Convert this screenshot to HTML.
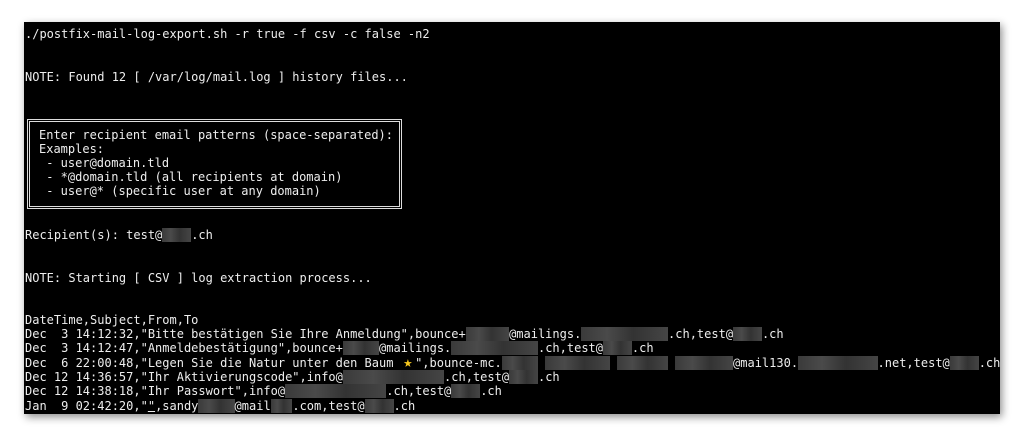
<!DOCTYPE html>
<html><head><meta charset="utf-8">
<style>
html,body{margin:0;padding:0;background:#fff;width:1024px;height:440px;overflow:hidden}
#t{position:absolute;left:24px;top:22px;width:976px;height:392px;background:#000;box-shadow:2px 3px 8px rgba(0,0,0,.45);}
.l{position:absolute;left:25px;font-family:"DejaVu Sans Mono","Liberation Mono",monospace;font-size:12px;line-height:14px;color:#eeeeee;white-space:pre;}
.b{background:linear-gradient(90deg,#3a3a3a,#4a4a4a 30%,#333 60%,#454545);color:transparent}
#box{position:absolute;left:27px;top:119px;width:369px;height:84px;border:3px double #ddd;}
.cur{text-decoration:underline}
.star{display:inline-block;width:14.4px;text-align:center;color:#f7c81e;font-size:15px;line-height:12px;vertical-align:top}
</style></head><body>
<div id="t"></div>
<div class="l" style="top:27px">./postfix-mail-log-export.sh -r true -f csv -c false -n2</div>
<div class="l" style="top:70px">NOTE: Found 12 [ /var/log/mail.log ] history files...</div>
<div id="box"></div>
<div class="l" style="top:128px;left:39px">Enter recipient email patterns (space-separated):
Examples:
 - user@domain.tld
 - *@domain.tld (all recipients at domain)
 - user@* (specific user at any domain)</div>
<div class="l" style="top:228px">Recipient(s): test@<span class="b">    </span>.ch</div>
<div class="l" style="top:271px">NOTE: Starting [ CSV ] log extraction process...</div>
<div class="l" style="top:313px">DateTime,Subject,From,To</div>
<div class="l" style="top:327px">Dec  3 14:12:32,"Bitte bestätigen Sie Ihre Anmeldung",bounce+<span class="b">      </span>@mailings.<span class="b">            </span>.ch,test@<span class="b">    </span>.ch</div>
<div class="l" style="top:341px">Dec  3 14:12:47,"Anmeldebestätigung",bounce+<span class="b">     </span>@mailings.<span class="b">            </span>.ch,test@<span class="b">    </span>.ch</div>
<div class="l" style="top:356px">Dec  6 22:00:48,"Legen Sie die Natur unter den Baum <span class="star">★</span>",bounce-mc.<span class="b">     </span> <span class="b">         </span> <span class="b">       </span> <span class="b">        </span>@mail130.<span class="b">           </span>.net,test@<span class="b">    </span>.ch</div>
<div class="l" style="top:370px">Dec 12 14:36:57,"Ihr Aktivierungscode",info@<span class="b">              </span>.ch,test@<span class="b">    </span>.ch</div>
<div class="l" style="top:384px">Dec 12 14:38:18,"Ihr Passwort",info@<span class="b">              </span>.ch,test@<span class="b">    </span>.ch</div>
<div class="l" style="top:399px">Jan  9 02:42:20,"<span class="cur">"</span>,sandy<span class="b">     </span>@mail<span class="b">   </span>.com,test@<span class="b">    </span>.ch</div>
</body></html>
